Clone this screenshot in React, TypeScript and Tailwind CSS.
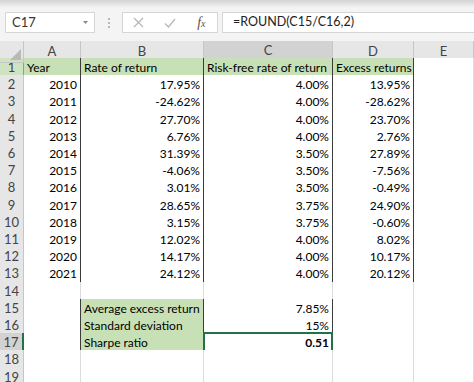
const GRID = 'grid grid-cols-[24px_57px_123px_129px_81px_1fr]'

type Cell = { v: string; right?: boolean; bold?: boolean }

const years: [string, string, string, string][] = [
  ['2010', '17.95%', '4.00%', '13.95%'],
  ['2011', '-24.62%', '4.00%', '-28.62%'],
  ['2012', '27.70%', '4.00%', '23.70%'],
  ['2013', '6.76%', '4.00%', '2.76%'],
  ['2014', '31.39%', '3.50%', '27.89%'],
  ['2015', '-4.06%', '3.50%', '-7.56%'],
  ['2016', '3.01%', '3.50%', '-0.49%'],
  ['2017', '28.65%', '3.75%', '24.90%'],
  ['2018', '3.15%', '3.75%', '-0.60%'],
  ['2019', '12.02%', '4.00%', '8.02%'],
  ['2020', '14.17%', '4.00%', '10.17%'],
  ['2021', '24.12%', '4.00%', '20.12%'],
]

function cellAt(r: number, c: number): Cell | null {
  if (r === 1) {
    return { v: ['Year', 'Rate of return', 'Risk-free rate of return', 'Excess returns'][c - 1] ?? '' }
  }
  if (r >= 2 && r <= 13 && c <= 4) return { v: years[r - 2][c - 1], right: true }
  if (r === 15) return c === 2 ? { v: 'Average excess return' } : c === 3 ? { v: '7.85%', right: true } : null
  if (r === 16) return c === 2 ? { v: 'Standard deviation' } : c === 3 ? { v: '15%', right: true } : null
  if (r === 17) return c === 2 ? { v: 'Sharpe ratio' } : c === 3 ? { v: '0.51', right: true, bold: true } : null
  return null
}

// cells that are inside one of the two bordered tables
function inTable(r: number, c: number) {
  return (r >= 1 && r <= 13 && c >= 1 && c <= 4) || (r >= 15 && r <= 17 && c >= 2 && c <= 3)
}

function isGreen(r: number, c: number) {
  return (r === 1 && c >= 1 && c <= 4) || (r >= 15 && r <= 17 && c === 2)
}

function NameBox() {
  return (
    <div className="ml-[5px] w-[90px] h-full bg-white border border-[#d6d6d6] flex items-center justify-between pl-[6px] pr-[5px]">
      <span className="text-[13px] text-[#333]">C17</span>
      <svg width="7" height="5" viewBox="0 0 7 5">
        <path d="M1 1h5L3.5 4z" fill="#8a8a8a" />
      </svg>
    </div>
  )
}

function FormulaBar() {
  return (
    <div className="flex flex-col h-[41px] bg-[#f4f4f4]">
      <div className="h-[8px] bg-linear-to-b from-[#d4d4d4] to-[#f4f4f4]" />
      <div className="mt-[4px] h-[21px] flex">
        <NameBox />
        <div className="w-[27px] flex flex-col items-center justify-center gap-[2px]">
          <span className="w-[2px] h-[2px] bg-[#b8b8b8]" />
          <span className="w-[2px] h-[2px] bg-[#b8b8b8]" />
          <span className="w-[2px] h-[2px] bg-[#b8b8b8]" />
        </div>
        <div className="w-[96px] h-full bg-white border border-[#d6d6d6] flex items-center">
          <div className="w-[32px] flex justify-center">
            <svg width="11" height="11" viewBox="0 0 11 11">
              <path d="M1 1l9 9M10 1l-9 9" stroke="#b5b5b5" strokeWidth="1.2" />
            </svg>
          </div>
          <div className="w-[32px] flex justify-center">
            <svg width="12" height="10" viewBox="0 0 12 10">
              <path d="M1 5.5l3.5 3.5L11 1" stroke="#b5b5b5" strokeWidth="1.2" fill="none" />
            </svg>
          </div>
          <div className="w-[32px] flex justify-center">
            <span className="font-['Liberation_Serif',serif] italic text-[14px] text-[#555] leading-none">
              f<span className="text-[10px]">x</span>
            </span>
          </div>
        </div>
        <div className="ml-[4px] flex-1 h-full bg-white border border-r-0 border-[#d6d6d6] flex items-center pl-[10px]">
          <span className="text-[12.5px] text-[#222]">=ROUND(C15/C16,2)</span>
        </div>
      </div>
    </div>
  )
}

function ColumnHeaders() {
  return (
    <div className={`${GRID} h-[17px] bg-[#e6e6e6] text-[13px] text-[#444]`}>
      <div className="relative border-r border-b border-[#c6c6c6]">
        <svg className="absolute right-[2px] bottom-[2px]" width="11" height="11" viewBox="0 0 11 11">
          <path d="M11 0v11H0z" fill="#b9b9b9" />
        </svg>
      </div>
      {['A', 'B', 'C', 'D', 'E'].map((l) => (
        <div
          key={l}
          className={`flex items-center justify-center border-r border-r-[#c6c6c6] ${
            l === 'C' ? 'bg-[#d2d2d2] border-b-2 border-b-[#217346]' : 'border-b border-b-[#c6c6c6]'
          }`}
        >
          {l}
        </div>
      ))}
    </div>
  )
}

function Row({ r }: { r: number }) {
  return (
    <div className={`${GRID} ${r % 5 === 3 ? 'h-[18px]' : 'h-[17px]'}`}>
      <div
        className={`flex items-center justify-center text-[13px] text-[#444] border-b border-b-[#d0d0d0] ${
          r === 17
            ? 'bg-[#d2d2d2] border-r-2 border-r-[#217346]'
            : r === 1
              ? 'bg-[#cfe3c2] border-r border-r-[#9a9a9a]'
              : 'bg-[#e6e6e6] border-r border-r-[#c6c6c6]'
        }`}
      >
        {r}
      </div>
      {[1, 2, 3, 4, 5].map((c) => {
        const cell = cellAt(r, c)
        const darkR = inTable(r, c) || inTable(r, c + 1)
        const darkB = inTable(r, c) || inTable(r + 1, c)
        return (
          <div
            key={c}
            className={`relative flex items-center whitespace-nowrap text-[12px] text-black px-[3px] ${
              darkR ? 'border-r border-r-[#3c3c3c]' : 'border-r border-r-[#dcdcdc]'
            } ${darkB ? 'border-b border-b-[#3c3c3c]' : 'border-b border-b-[#dcdcdc]'} ${
              isGreen(r, c) ? 'bg-[#c8e0b6]' : 'bg-white'
            } ${cell?.right ? 'justify-end' : 'justify-start'} ${cell?.bold ? 'font-bold' : ''}`}
          >
            {cell?.v}
            {r === 17 && c === 3 && (
              <div className="absolute -left-[1px] -top-[1px] -right-[1px] -bottom-[1px] border-2 border-[#217346]">
                <span className="absolute -right-[4px] -bottom-[4px] w-[6px] h-[6px] bg-[#217346] border border-white" />
              </div>
            )}
          </div>
        )
      })}
    </div>
  )
}

export default function App() {
  const rows = Array.from({ length: 19 }, (_, i) => i + 1)
  return (
    <div className="w-[474px] h-[382px] overflow-hidden bg-white font-['Lato','Liberation_Sans',sans-serif]">
      <FormulaBar />
      <ColumnHeaders />
      {rows.map((r) => (
        <Row key={r} r={r} />
      ))}
    </div>
  )
}
